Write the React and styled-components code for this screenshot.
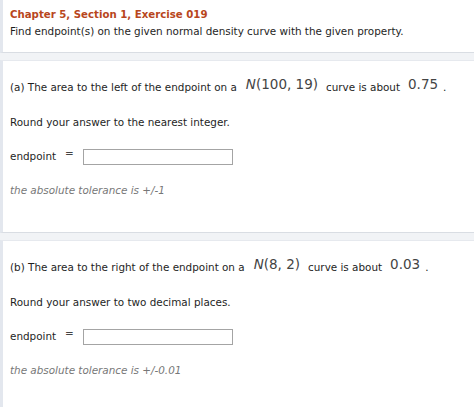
import React from "react";
import styled, { createGlobalStyle } from "styled-components";

const GlobalStyle = createGlobalStyle`
  body {
    margin: 0;
    background: #f1f3f6;
    font-family: "DejaVu Sans", Verdana, sans-serif;
    color: #1e1e1e;
  }
`;

const Page = styled.div`
  display: flex;
  flex-direction: column;
  gap: 7px;
  background: #f1f3f6;
  min-height: 407px;
`;

const Panel = styled.div`
  background: #fff;
  border-left: 3px solid #e3e7ee;
  border-bottom: 1px solid #d9dde3;
  border-top: ${p => (p.top ? "none" : "1px solid #e6e9ee")};
  padding: ${p => p.pad};
`;

const Title = styled.div`
  color: #b8461c;
  font-weight: bold;
  font-size: 10.2px;
  line-height: 16px;
`;

const Intro = styled.div`
  font-size: 10.4px;
  line-height: 16px;
`;

const Line = styled.p`
  margin: 0 0 ${p => p.gap}px;
  font-size: 10.4px;
  line-height: 17px;
  display: flex;
  align-items: center;
`;

const Math = styled.span`
  font-size: 13.5px;
  color: #444;
  margin: ${p => (p.last ? "0 5px 0 8px" : "0 8px 0 9px")};
  position: relative;
  top: -3px;
  i {
    font-style: italic;
  }
`;

const AnswerRow = styled.div`
  display: flex;
  align-items: center;
  font-size: 10.4px;
  line-height: 17px;
  margin-bottom: ${p => p.gap}px;
`;

const Eq = styled.span`
  margin: 0 9px 0 9px;
  color: #444;
  position: relative;
  top: -3px;
`;

const Field = styled.input`
  width: 150px;
  height: 16px;
  box-sizing: border-box;
  border: 1px solid #a4a4a4;
  padding: 0;
  margin: 0;
`;

const Tolerance = styled.div`
  font-style: italic;
  color: #777;
  font-size: 10.4px;
  line-height: 17px;
`;

function Part({ label, side, dist, area, round, tol }) {
  return (
    <Panel pad="18px 8px 33px 7px">
      <Line gap={18}>
        ({label}) The area to the {side} of the endpoint on a
        <Math>
          <i>N</i>({dist})
        </Math>
        curve is about
        <Math last>{area}</Math>.
      </Line>
      <Line gap={17}>Round your answer to {round}.</Line>
      <AnswerRow gap={17}>
        endpoint<Eq>=</Eq>
        <Field type="text" />
      </AnswerRow>
      <Tolerance>the absolute tolerance is +/-{tol}</Tolerance>
    </Panel>
  );
}

export default function App() {
  return (
    <>
      <GlobalStyle />
      <Page>
        <Panel top pad="7px 8px 13px 7px">
          <Title>Chapter 5, Section 1, Exercise 019</Title>
          <Intro>
            Find endpoint(s) on the given normal density curve with the given
            property.
          </Intro>
        </Panel>
        <Part
          label="a"
          side="left"
          dist="100, 19"
          area="0.75"
          round="the nearest integer"
          tol="1"
        />
        <Part
          label="b"
          side="right"
          dist="8, 2"
          area="0.03"
          round="two decimal places"
          tol="0.01"
        />
      </Page>
    </>
  );
}
